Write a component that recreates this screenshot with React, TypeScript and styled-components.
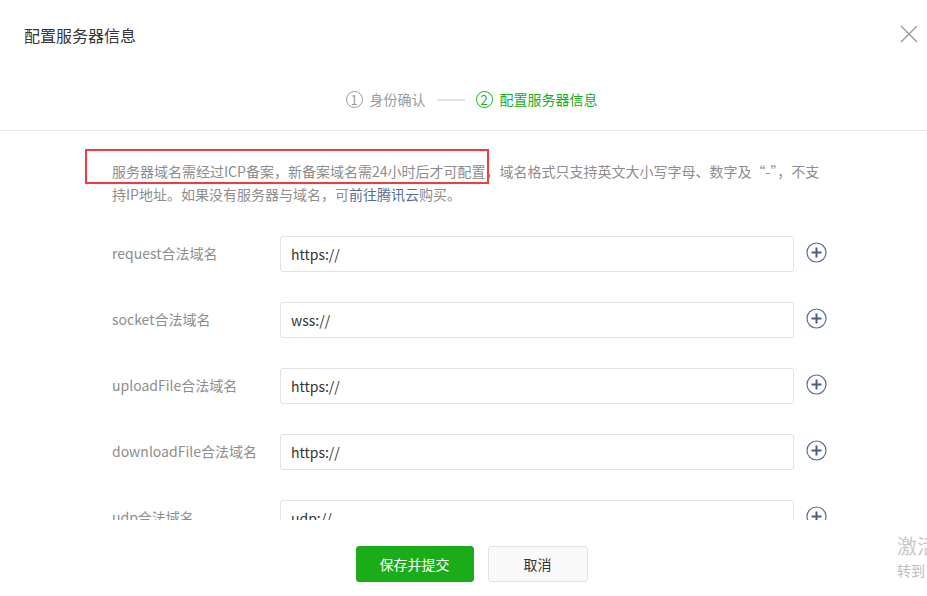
import React from "react";
import styled, { createGlobalStyle } from "styled-components";

const Global = createGlobalStyle`
  html, body { margin: 0; padding: 0; background: #fff; overflow: hidden; }
  body { font-family: "Microsoft YaHei", "Noto Sans CJK SC", "Noto Sans", sans-serif; }
  * { box-sizing: border-box; }
`;

const Dialog = styled.div`
  position: relative;
  width: 927px;
  height: 596px;
  background: #fff;
  display: flex;
  flex-direction: column;
  overflow: hidden;
`;

const Header = styled.div`
  height: 70px;
  display: flex;
  align-items: center;
  justify-content: space-between;
  padding: 0 8px 0 24px;
`;

const Title = styled.h3`
  margin: 0;
  font-size: 16px;
  font-weight: normal;
  color: #353535;
  line-height: 20px;
`;

const CloseBtn = styled.button`
  width: 20px;
  height: 20px;
  padding: 0;
  border: 0;
  background: none;
  display: flex;
  align-items: center;
  justify-content: center;
  margin-top: -2px;
`;

const Steps = styled.div`
  height: 61px;
  display: flex;
  align-items: center;
  justify-content: center;
  padding: 0 0 0 16px;
  border-bottom: 1px solid #e7e7eb;
`;

const Step = styled.div<{ $active?: boolean }>`
  display: flex;
  align-items: center;
  gap: 7px;
  font-size: 14px;
  line-height: 20px;
  color: ${(p) => (p.$active ? "#1aad19" : "#9a9a9a")};
  margin-top: -2px;
`;

const StepNum = styled.span`
  width: 17px;
  height: 17px;
  border-radius: 50%;
  border: 1px solid currentColor;
  display: inline-flex;
  align-items: center;
  justify-content: center;
  font-size: 13px;
  line-height: 1;
`;

const StepLine = styled.span`
  width: 28px;
  height: 2px;
  background: #e3e3e6;
  margin: 0 11px;
`;

const Body = styled.div`
  position: relative;
  height: 389px;
  overflow: hidden;
  padding: 29px 0 0 112px;
`;

const Tips = styled.p`
  margin: 0 0 30px;
  width: 710px;
  font-size: 14px;
  line-height: 23px;
  color: #8d8d8d;
`;

const Link = styled.a`
  color: #576b95;
  text-decoration: none;
`;

const Highlight = styled.div`
  position: absolute;
  left: 85px;
  top: 18px;
  width: 404px;
  height: 35px;
  border: 2px solid #f23c3c;
  pointer-events: none;
`;

const Rows = styled.div`
  display: flex;
  flex-direction: column;
  gap: 30px;
`;

const Row = styled.div`
  display: flex;
  align-items: center;
  height: 36px;
`;

const Label = styled.label`
  width: 168px;
  font-size: 14px;
  color: #8d8d8d;
  line-height: 20px;
  margin-top: -2px;
`;

const Input = styled.div`
  width: 514px;
  height: 36px;
  border: 1px solid #e2e2e6;
  border-radius: 3px;
  padding: 0 10px;
  display: flex;
  align-items: center;
  font-size: 14px;
  color: #353535;
`;

const AddBtn = styled.button`
  margin-left: 12px;
  width: 21px;
  height: 21px;
  padding: 0;
  border: 0;
  background: none;
  display: flex;
  margin-top: -4px;
`;

const Footer = styled.div`
  flex: 1;
  display: flex;
  justify-content: center;
  align-items: flex-start;
  padding: 26px 0 0 0;
  gap: 14px;
  margin-left: 16px;
`;

const Button = styled.button<{ $primary?: boolean }>`
  height: 36px;
  min-width: 100px;
  padding: 0 23px;
  border-radius: 3px;
  font-family: inherit;
  font-size: 14px;
  border: 1px solid ${(p) => (p.$primary ? "#1aad19" : "#e2e2e2")};
  background: ${(p) => (p.$primary ? "#1aad19" : "#f9f9f9")};
  color: ${(p) => (p.$primary ? "#fff" : "#353535")};
`;

const Watermark = styled.div`
  position: absolute;
  left: 897px;
  top: 533px;
  white-space: nowrap;
  color: #c8c8c8;
  pointer-events: none;
`;

const WmBig = styled.div`
  font-size: 20px;
  line-height: 26px;
`;

const WmSmall = styled.div`
  font-size: 14px;
  line-height: 22px;
  color: #bdbdbd;
`;

const rows = [
  { label: "request合法域名", value: "https://" },
  { label: "socket合法域名", value: "wss://" },
  { label: "uploadFile合法域名", value: "https://" },
  { label: "downloadFile合法域名", value: "https://" },
  { label: "udp合法域名", value: "udp://" },
  { label: "tcp合法域名", value: "tcp://" },
];

const PlusIcon = () => (
  <svg width="21" height="21" viewBox="0 0 21 21">
    <circle cx="10.5" cy="10.5" r="9.5" fill="none" stroke="#5d6f97" strokeWidth="1.2" />
    <path d="M10.5 5.5v10M5.5 10.5h10" stroke="#4a5d88" strokeWidth="2" />
  </svg>
);

export default function App() {
  return (
    <>
      <Global />
      <Dialog>
        <Header>
          <Title>配置服务器信息</Title>
          <CloseBtn aria-label="关闭">
            <svg width="18" height="18" viewBox="0 0 18 18">
              <path d="M1 1l16 16M17 1L1 17" stroke="#9a9a9a" strokeWidth="1.4" />
            </svg>
          </CloseBtn>
        </Header>
        <Steps>
          <Step>
            <StepNum>1</StepNum>身份确认
          </Step>
          <StepLine />
          <Step $active>
            <StepNum>2</StepNum>配置服务器信息
          </Step>
        </Steps>
        <Body>
          <Tips>
            服务器域名需经过ICP备案，新备案域名需24小时后才可配置，域名格式只支持英文大小写字母、数字及“-”，不支持IP地址。如果没有服务器与域名，可
            <Link href="#">前往腾讯云</Link>购买。
          </Tips>
          <Highlight />
          <Rows>
            {rows.map((r) => (
              <Row key={r.label}>
                <Label>{r.label}</Label>
                <Input>{r.value}</Input>
                <AddBtn aria-label="添加">
                  <PlusIcon />
                </AddBtn>
              </Row>
            ))}
          </Rows>
        </Body>
        <Footer>
          <Button $primary>保存并提交</Button>
          <Button>取消</Button>
        </Footer>
        <Watermark>
          <WmBig>激活 Windows</WmBig>
          <WmSmall>转到“设置”以激活 Windows。</WmSmall>
        </Watermark>
      </Dialog>
    </>
  );
}
